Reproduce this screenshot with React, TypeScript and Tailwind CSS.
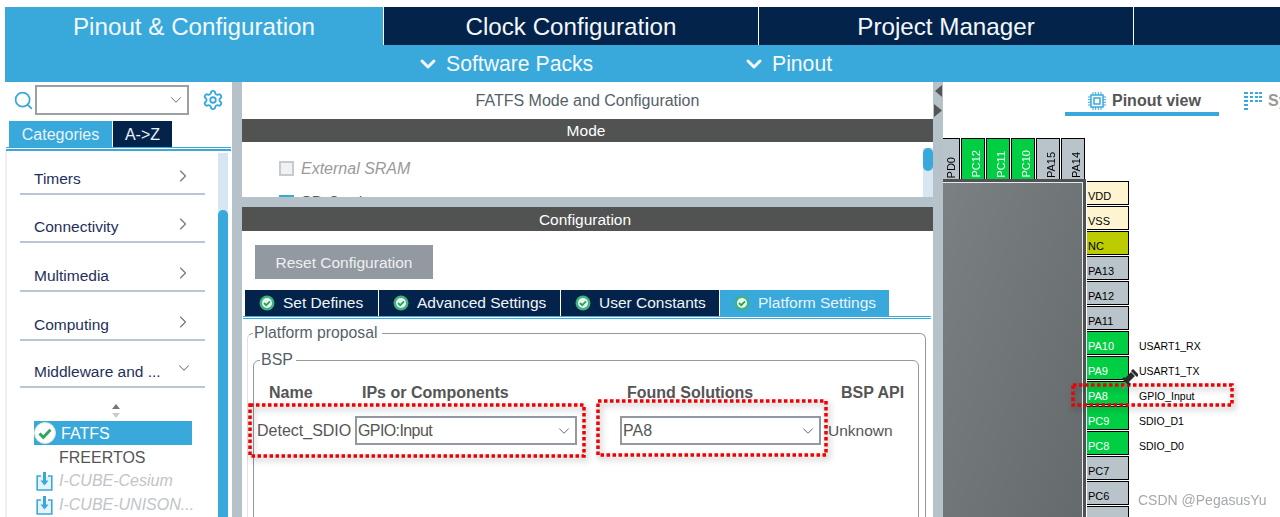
import React from "react";
import { ChevronDown, ChevronRight, Search, Settings } from "lucide-react";

function Check({ big }: { big?: boolean }) {
  if (big) {
    return (
      <svg width="22" height="22" viewBox="0 0 22 22" className="shrink-0">
        <circle cx="11" cy="11" r="10.5" fill="#ffffff" stroke="#cfeadb" />
        <path d="M5.5 11.5l3.8 3.8 7.2-7.6" fill="none" stroke="#35a55f" strokeWidth="3" />
      </svg>
    );
  }
  return (
    <svg width="16" height="16" viewBox="0 0 16 16" className="shrink-0">
      <circle cx="8" cy="8" r="7.5" fill="#3fb27f" />
      <circle cx="8" cy="8" r="5" fill="#e9f6ef" />
      <path d="M5 8l2.2 2.2L11 6.4" fill="none" stroke="#23a066" strokeWidth="1.8" />
    </svg>
  );
}

function Download() {
  return (
    <svg width="17" height="20" viewBox="0 0 17 20" className="shrink-0">
      <path d="M5 5H1.2v14h14.6V5H12" fill="#e6f3fa" stroke="#39a9dc" strokeWidth="1.6" />
      <path d="M8.5 1v10" stroke="#39a9dc" strokeWidth="3" />
      <path d="M4.5 9.5h8l-4 5z" fill="#39a9dc" />
    </svg>
  );
}

function RedBox({ left, top, width, height }: { left: string; top: string; width: number; height: number }) {
  return (
    <svg
      width={width}
      height={height}
      className={`absolute pointer-events-none drop-shadow-[2px_3px_3px_rgba(0,0,0,0.35)] ${left} ${top}`}
    >
      <rect x="2" y="2" width={width - 4} height={height - 4} fill="none" stroke="#f00000" strokeWidth="3.5" strokeDasharray="3.5 2.5" />
    </svg>
  );
}

function Category({ label, h, open }: { label: string; h: string; open?: boolean }) {
  return (
    <div className={`flex items-end justify-between border-b-2 border-[#bcc6d2] ml-[13px] w-[185px] pb-[4px] pl-[14px] pr-[15px] ${h}`}>
      <span className="text-[15.5px] leading-[20px] text-[#1f2f5c] whitespace-nowrap">{label}</span>
      {open ? (
        <ChevronDown size={18} strokeWidth={1.4} color="#777" className="-mr-[3px] mb-[5px]" />
      ) : (
        <ChevronRight size={20} strokeWidth={1.4} color="#777" className="-mr-[3px] mb-[3px]" />
      )}
    </div>
  );
}

function Sidebar() {
  return (
    <div className="w-[227px] h-full flex flex-col">
      <div className="flex items-center pt-[3px] h-[33px] pl-[8px]">
        <Search size={21} strokeWidth={2} color="#39a9dc" className="shrink-0" />
        <div className="ml-[1px] w-[154px] h-[30px] border-2 border-[#9aa0a6] flex items-center justify-end pr-[2px]">
          <ChevronDown size={18} strokeWidth={1.3} color="#666" />
        </div>
        <Settings size={22} strokeWidth={2} color="#39a9dc" className="ml-[13px] shrink-0" />
      </div>
      <div className="flex mt-[6px] ml-[4px] h-[26px] text-[16px] leading-[27px]">
        <div className="w-[103px] bg-[#39a9dc] text-[#e8f4fa] text-center">Categories</div>
        <div className="ml-px w-[59px] bg-[#03234b] text-[#e8f4fa] text-center">A-&gt;Z</div>
      </div>
      <div className="h-[4px] mx-px border-t border-b-2 border-[#39a9dc]" />
      <div className="flex-1 min-h-0 flex">
        <div className="w-[213px] border-l-2 border-[#f0f0f0] flex flex-col">
          <Category label="Timers" h="h-[44px]" />
          <Category label="Connectivity" h="h-[49px]" />
          <Category label="Multimedia" h="h-[49px]" />
          <Category label="Computing" h="h-[49px]" />
          <Category label="Middleware and ..." h="h-[48px]" open />
          <div className="h-[33px] pt-[16px] pl-[104px]">
            <svg width="10" height="14" viewBox="0 0 10 14">
              <path d="M5 0l4 5H1z" fill="#777" />
              <path d="M5 14l4-5H1z" fill="#ccc" />
            </svg>
          </div>
          <div className="ml-[27px] w-[158px] h-[24px] bg-[#39a9dc] flex items-center text-white text-[16px]">
            <Check big />
            <span className="ml-[5px] pt-[1px]">FATFS</span>
          </div>
          <div className="ml-[52px] mt-[2px] h-[22px] leading-[22px] text-[16px] text-[#555]">FREERTOS</div>
          <div className="ml-[29px] h-[24px] flex items-center gap-[6px] text-[16px] italic text-[#c0c4c8]">
            <Download />
            <span>I-CUBE-Cesium</span>
          </div>
          <div className="ml-[29px] h-[24px] flex items-center gap-[6px] text-[16px] italic text-[#c0c4c8]">
            <Download />
            <span className="whitespace-nowrap">I-CUBE-UNISON...</span>
          </div>
        </div>
        <div className="w-[10px] mt-[2px] bg-[#d6e6f3] flex flex-col shrink-0">
          <div className="mt-[57px] flex-1 bg-[#39a9dc] rounded-t-[5px]" />
        </div>
      </div>
    </div>
  );
}

function ConfigTab({ label, w, active }: { label: string; w: string; active?: boolean }) {
  return (
    <div className={`h-[26px] flex items-center pl-[14px] gap-[8px] text-[15.5px] leading-[28px] ${w} ${active ? "bg-[#39a9dc] text-[#e8f4fa]" : "bg-[#03234b] text-[#f2f5f8]"}`}>
      <Check />
      <span className="whitespace-nowrap">{label}</span>
    </div>
  );
}

function SelectBox({ text, w, tight }: { text: string; w: string; tight?: boolean }) {
  return (
    <div className={`h-[29px] border-2 border-[#9299a0] flex items-center justify-between pl-[1px] pr-[2px] text-[16px] text-[#555] ${w}`}>
      <span className={tight ? "tracking-[-0.6px]" : ""}>{text}</span>
      <ChevronDown size={18} strokeWidth={1.3} color="#666" />
    </div>
  );
}

function Middle() {
  return (
    <div className="w-[691px] h-full flex flex-col">
      <div className="relative h-[115px] overflow-hidden shrink-0">
        <div className="h-[37px] flex items-center justify-center text-[16px] text-[#555f6a]">FATFS Mode and Configuration</div>
        <div className="h-[23px] bg-[#515352] text-white text-[15.5px] leading-[23px] text-center pr-[3px]">Mode</div>
        <div className="pl-[37px] pt-[19px]">
          <div className="flex items-center gap-[7px] h-[15px]">
            <div className="w-[15px] h-[15px] bg-[#f0f1f3] border-2 border-[#c8cbce]" />
            <span className="italic text-[16px] text-[#9a9a9a] whitespace-nowrap">External SRAM</span>
          </div>
          <div className="flex items-center gap-[7px] mt-[19px] h-[15px]">
            <div className="w-[15px] h-[15px] bg-[#39a9dc]" />
            <span className="text-[16px] text-[#555] whitespace-nowrap">SD Card</span>
          </div>
        </div>
        <div className="absolute right-0 top-[66px] bottom-0 w-[10px] bg-[#d6e6f3]">
          <div className="h-[23px] bg-[#39a9dc] rounded-[5px]" />
        </div>
      </div>
      <div className="h-[10px] bg-[#b6c2c9] shrink-0" />
      <div className="h-[24px] bg-[#515352] text-white text-[15.5px] leading-[25px] text-center pr-[5px] shrink-0">Configuration</div>
      <div className="ml-[13px] mt-[14px] w-[178px] h-[34px] bg-[#9299a0] text-[#eef0f2] text-[15.5px] leading-[36px] text-center shrink-0">Reset Configuration</div>
      <div className="flex gap-px ml-[3px] mt-[11px] shrink-0">
        <ConfigTab label="Set Defines" w="w-[133px]" />
        <ConfigTab label="Advanced Settings" w="w-[181px]" />
        <ConfigTab label="User Constants" w="w-[158px]" />
        <ConfigTab label="Platform Settings" w="w-[169px]" active />
      </div>
      <div className="h-[3px] ml-px mr-[2px] border-t border-b border-[#39a9dc] shrink-0" />
      <fieldset className="relative ml-[5px] mr-[7px] mt-[4px] flex-1 min-h-[260px] border border-[#9299a0] border-l-[#dfe3e6] rounded-t-[6px] pl-[5px] pr-[6px]">
        <legend className="pl-px pr-[5px] text-[15.75px] leading-[20px] text-[#555f6a] whitespace-nowrap">Platform proposal</legend>
        <fieldset className="mt-[7px] h-[240px] border border-[#9299a0] rounded-t-[6px]">
          <legend className="ml-[6px] px-px pr-[3px] text-[16px] leading-[20px] text-[#555f6a]">BSP</legend>
          <div className="grid grid-cols-[101px_265px_208px_1fr] grid-rows-[34px_29px] gap-y-[6px] mt-[6px] text-[16px] text-[#555]">
            <div className="font-bold pl-[15px] leading-[34px]">Name</div>
            <div className="font-bold pl-[7px] leading-[34px] whitespace-nowrap">IPs or Components</div>
            <div className="font-bold pl-[7px] leading-[34px] whitespace-nowrap">Found Solutions</div>
            <div className="font-bold pl-[13px] leading-[34px] whitespace-nowrap">BSP API</div>
            <div className="pl-[3px] leading-[29px] whitespace-nowrap">Detect_SDIO</div>
            <SelectBox text="GPIO:Input" w="w-[222px]" tight />
            <SelectBox text="PA8" w="w-[201px]" />
            <div className="leading-[29px] text-[15.5px]">Unknown</div>
          </div>
        </fieldset>
      </fieldset>
    </div>
  );
}

function TopPin({ name, green }: { name: string; green?: boolean }) {
  return (
    <div className={`w-[24px] h-[41px] border border-b-0 border-black flex items-end justify-center pl-[6px] pb-px ${green ? "bg-[#00cf44] text-white" : "bg-[#b9c4ca] text-black"}`}>
      <span className="[writing-mode:vertical-rl] rotate-180 text-[11px] leading-none">{name}</span>
    </div>
  );
}

const sidePins = [
  { n: "VDD", c: "bg-[#fff4d0]" },
  { n: "VSS", c: "bg-[#fff4d0]" },
  { n: "NC", c: "bg-[#bccc00]" },
  { n: "PA13" },
  { n: "PA12" },
  { n: "PA11" },
  { n: "PA10", g: true, l: "USART1_RX" },
  { n: "PA9", g: true, l: "USART1_TX" },
  { n: "PA8", g: true, l: "GPIO_Input" },
  { n: "PC9", g: true, l: "SDIO_D1" },
  { n: "PC8", g: true, l: "SDIO_D0" },
  { n: "PC7" },
  { n: "PC6" },
  { n: "" },
];

function Right() {
  return (
    <div className="flex-1 min-w-0 h-full overflow-hidden flex flex-col">
      <div className="h-[56px] shrink-0 flex pt-[7px] pl-[122px] overflow-hidden">
        <div className="w-[154px] h-[27px] shrink-0 border-b-[4px] border-[#39a9dc] flex items-center pl-[23px] gap-[6px] text-[16px] font-bold text-[#555]">
          <svg width="18" height="18" viewBox="0 0 18 18" fill="none" stroke="#39a9dc" className="shrink-0">
            <rect x="3" y="3" width="12" height="12" strokeWidth="1.5" />
            <rect x="6" y="6" width="6" height="6" strokeWidth="1.5" />
            <path d="M5 0v3M7.7 0v3M10.3 0v3M13 0v3M5 15v3M7.7 15v3M10.3 15v3M13 15v3M0 5h3M0 7.7h3M0 10.3h3M0 13h3M15 5h3M15 7.7h3M15 10.3h3M15 13h3" strokeWidth="1" />
          </svg>
          <span className="whitespace-nowrap">Pinout view</span>
        </div>
        <div className="ml-[25px] h-[23px] shrink-0 flex items-center gap-[6px] text-[16px] font-bold text-[#999] whitespace-nowrap">
          <svg width="18" height="18" viewBox="0 0 18 18" fill="#39a9dc" className="shrink-0">
            <path d="M0 0h4v2H0zM0 4h4v2H0zM0 8h4v2H0zM0 12h4v2H0zM0 16h4v2H0zM6 0h3v2H6zM6 4h3v2H6zM6 8h3v2H6zM11 0h3v2h-3zM11 4h3v2h-3zM11 8h3v2h-3zM15 0h3v2h-3zM15 4h3v2h-3zM15 8h3v2h-3z" />
          </svg>
          <span>System view</span>
        </div>
      </div>
      <div className="flex gap-px shrink-0">
        <div className="w-[17px] h-[41px] bg-[#b9c4ca] border-r border-t border-black flex items-end justify-center pb-px">
          <span className="[writing-mode:vertical-rl] rotate-180 text-[11px] leading-none text-black">PD0</span>
        </div>
        <TopPin name="PC12" green />
        <TopPin name="PC11" green />
        <TopPin name="PC10" green />
        <TopPin name="PA15" />
        <TopPin name="PA14" />
      </div>
      <div className="flex flex-1 min-h-0">
        <div className="w-[143px] h-[400px] shrink-0 bg-gradient-to-br from-[#7b8082] to-[#63686b] border-t-[3px] border-r-[3px] border-[#4e5254]">
          <div className="h-full border-t border-r border-[#e8e8e8]" />
        </div>
        <div className="flex flex-col gap-px pt-[2px]">
          {sidePins.map((p, i) => (
            <div key={i} className="flex items-center h-[24px] shrink-0">
              <div className={`w-[42px] h-[24px] ml-px border border-l-0 border-black flex items-end pl-px text-[11px] leading-[15px] ${p.g ? "bg-[#00cf44] text-white" : `${p.c ?? "bg-[#b9c4ca]"} text-black`}`}>
                {p.n}
              </div>
              {p.l && <span className="ml-[10px] pt-[8px] text-[10.5px] text-black whitespace-nowrap">{p.l}</span>}
            </div>
          ))}
        </div>
      </div>
    </div>
  );
}

export default function App() {
  return (
    <div className="relative w-[1280px] h-[517px] overflow-hidden bg-white font-['Liberation_Sans',Arial,sans-serif]">
      <div className="pl-[5px] pt-[7px]">
        <div className="flex h-[38px] text-[24.2px] leading-[40px] text-[#f4f8fb] text-center">
          <div className="w-[378px] bg-[#39a9dc]">Pinout &amp; Configuration</div>
          <div className="w-[375px] bg-[#03234b] border-l border-white">Clock Configuration</div>
          <div className="w-[375px] bg-[#03234b] border-l border-white">Project Manager</div>
          <div className="flex-1 bg-[#03234b] border-l border-white" />
        </div>
        <div className="h-[37px] bg-[#39a9dc] flex items-center pt-[1px] text-[21.2px] text-[#f4f8fb]">
          <ChevronDown size={24} strokeWidth={3} className="ml-[411px]" />
          <span className="ml-[6px] w-[297px]">Software Packs</span>
          <ChevronDown size={24} strokeWidth={3} className="-ml-[1px]" />
          <span className="ml-[6px]">Pinout</span>
        </div>
      </div>
      <div className="flex h-[435px] pl-[5px]">
        <Sidebar />
        <div className="w-[10px] bg-[#b6c2c9] shrink-0" />
        <Middle />
        <div className="relative w-[10px] bg-[#b6c2c9] shrink-0">
          <svg width="10" height="40" viewBox="0 0 10 40" className="absolute top-0 left-0">
            <path d="M9 3v12L2 9z" fill="#555" />
            <path d="M1 22v13l8-6.5z" fill="#555" />
          </svg>
        </div>
        <Right />
      </div>
      <RedBox left="left-[248px]" top="top-[403px]" width={338} height={55} />
      <RedBox left="left-[596px]" top="top-[399px]" width={232} height={58} />
      <RedBox left="left-[1071px]" top="top-[383px]" width={163} height={24} />
      <svg width="18" height="22" viewBox="0 0 18 22" className="absolute left-[1120px] top-[369px]">
        <path d="M8 13L2 21" stroke="#808080" strokeWidth="1.6" />
        <path d="M6 12L13 5" stroke="#2b2b2b" strokeWidth="5.5" />
        <path d="M12 1l6 6" stroke="#2b2b2b" strokeWidth="3" />
        <path d="M3 9l7 7" stroke="#2b2b2b" strokeWidth="2.5" />
      </svg>
      <div className="absolute left-[1138px] top-[491px] text-[14px] leading-[18px] text-[#9aa0a4] opacity-90 whitespace-nowrap">CSDN @PegasusYu</div>
    </div>
  );
}
